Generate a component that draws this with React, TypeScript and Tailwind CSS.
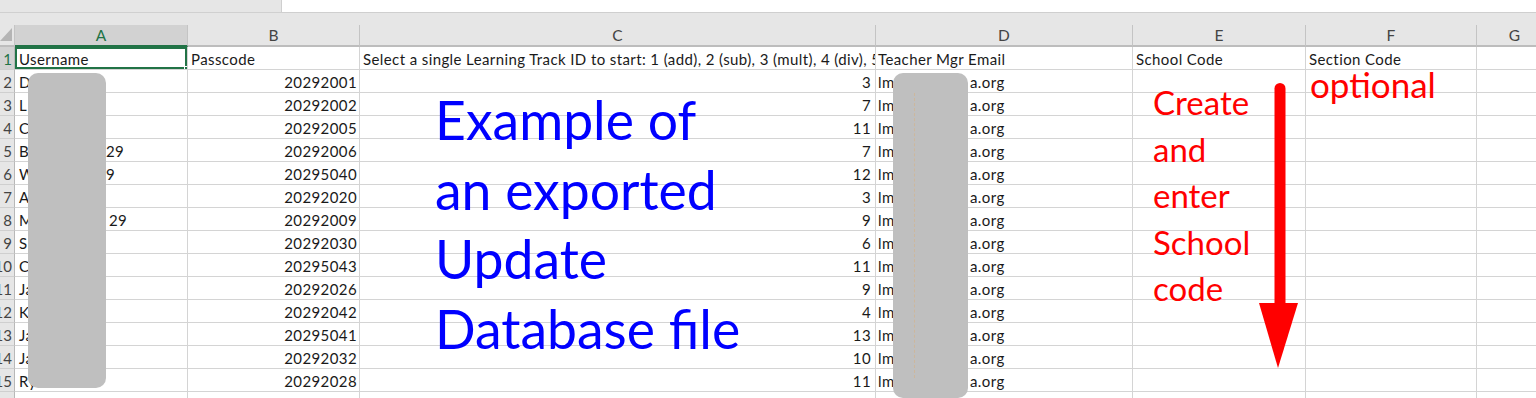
import React from "react";

type Row = {
  n: number;
  a: { f: string; s?: string; sw?: number };
  b: string;
  c: string;
};

const rows: Row[] = [
  { n: 2, a: { f: "D" }, b: "20292001", c: "3" },
  { n: 3, a: { f: "L" }, b: "20292002", c: "7" },
  { n: 4, a: { f: "C" }, b: "20292005", c: "11" },
  { n: 5, a: { f: "B", s: "29", sw: 87 }, b: "20292006", c: "7" },
  { n: 6, a: { f: "W", s: "9", sw: 87 }, b: "20295040", c: "12" },
  { n: 7, a: { f: "A" }, b: "20292020", c: "3" },
  { n: 8, a: { f: "M", s: "29", sw: 90 }, b: "20292009", c: "9" },
  { n: 9, a: { f: "S" }, b: "20292030", c: "6" },
  { n: 10, a: { f: "C" }, b: "20295043", c: "11" },
  { n: 11, a: { f: "Ja" }, b: "20292026", c: "9" },
  { n: 12, a: { f: "K" }, b: "20292042", c: "4" },
  { n: 13, a: { f: "Ja" }, b: "20295041", c: "13" },
  { n: 14, a: { f: "Ja" }, b: "20292032", c: "10" },
  { n: 15, a: { f: "Ry" }, b: "20292028", c: "11" },
];

const cell =
  "h-[23px] shrink-0 border-r border-b border-[#d4d4d4] flex items-center pt-[3px] overflow-hidden whitespace-nowrap text-[15px] tracking-[0.4px] text-[#1a1a1a]";

function RowHead({ n, sel }: { n: number | string; sel?: boolean }) {
  return (
    <div
      className={`h-[23px] w-[15px] shrink-0 border-r border-r-[#b8b8b8] border-b border-b-[#cfcfcf] flex items-center justify-end pt-[3px] overflow-hidden whitespace-nowrap pr-[2px] text-[15px] ${
        sel ? "bg-[#d2d2d2] text-[#217346]" : "bg-[#e6e6e6] text-[#444]"
      }`}
    >
      {n}
    </div>
  );
}

function ColHead({ l, w, sel }: { l: string; w: string; sel?: boolean }) {
  return (
    <div
      className={`h-[22px] shrink-0 border-r border-r-[#c4c4c4] flex items-center justify-center pt-[2px] text-[15.5px] ${w} ${
        sel
          ? "bg-[#d2d2d2] text-[#217346] border-b-2 border-b-[#217346]"
          : "bg-[#e6e6e6] text-[#444] border-b-2 border-b-[#bdbdbd]"
      }`}
    >
      {l}
    </div>
  );
}

export default function App() {
  return (
    <div className="w-[1536px] h-[398px] overflow-hidden bg-white font-['Lato',sans-serif] relative">
      {/* top band */}
      <div className="h-[25px] bg-[#e6e6e6] flex flex-col">
        <div className="h-[13px] flex">
          <div className="w-[281px] border-b border-[#d0d0d0]" />
          <div className="flex-1 bg-white border-l border-b border-[#cfcfcf]" />
        </div>
      </div>

      {/* column headers */}
      <div className="flex">
        <div className="h-[22px] w-[15px] shrink-0 bg-[#e6e6e6] border-r border-r-[#c4c4c4] border-b-2 border-b-[#bdbdbd] flex items-end justify-end pb-[4px] pr-[2px]">
          <svg width="12" height="13" viewBox="0 0 12 13">
            <polygon points="12,0 12,13 0,13" fill="#b5b5b5" />
          </svg>
        </div>
        <ColHead l="A" w="w-[173px]" sel />
        <ColHead l="B" w="w-[172px]" />
        <ColHead l="C" w="w-[516px]" />
        <ColHead l="D" w="w-[257px]" />
        <ColHead l="E" w="w-[173px]" />
        <ColHead l="F" w="w-[171px]" />
        <ColHead l="G" w="w-[76px]" />
        <ColHead l="" w="w-[100px]" />
      </div>

      {/* row 1 */}
      <div className="flex">
        <RowHead n={1} sel />
        <div className={`${cell} w-[173px] pl-[4px] relative`}>
          Username
          <div className="absolute inset-0 border-2 border-[#217346]" />
          <div className="absolute right-[-3px] bottom-[-3px] w-[6px] h-[6px] bg-[#217346] border border-white" />
        </div>
        <div className={`${cell} w-[172px] pl-[3px]`}>Passcode</div>
        <div className={`${cell} w-[516px] pl-[3px]`}>
          Select a single Learning Track ID to start: 1 (add), 2 (sub), 3 (mult), 4 (div), 5 (mixed)
        </div>
        <div className={`${cell} w-[257px] pl-[2px]`}>Teacher Mgr Email</div>
        <div className={`${cell} w-[173px] pl-[3px]`}>School Code</div>
        <div className={`${cell} w-[171px] pl-[3px]`}>Section Code</div>
        <div className={`${cell} w-[76px]`} />
        <div className={`${cell} w-[100px]`} />
      </div>

      {rows.map((r) => (
        <div className="flex" key={r.n}>
          <RowHead n={r.n} />
          <div className={`${cell} w-[173px] pl-[4px]`}>
            {r.a.s ? (
              <>
                <span className="inline-block" style={{ width: r.a.sw }}>
                  {r.a.f}
                </span>
                {r.a.s}
              </>
            ) : (
              r.a.f
            )}
          </div>
          <div className={`${cell} w-[172px] justify-end pr-[2px]`}>{r.b}</div>
          <div className={`${cell} w-[516px] justify-end pr-[4px]`}>{r.c}</div>
          <div className={`${cell} w-[257px] pl-[2px]`}>
            <span className="inline-block w-[92px]">lm</span>a.org
          </div>
          <div className={`${cell} w-[173px]`} />
          <div className={`${cell} w-[171px]`} />
          <div className={`${cell} w-[76px]`} />
          <div className={`${cell} w-[100px]`} />
        </div>
      ))}

      {/* row 16 (partially visible) */}
      <div className="flex">
        <RowHead n={16} />
        <div className={`${cell} w-[173px] pl-[4px]`}>Abdullah Hill</div>
        <div className={`${cell} w-[172px]`} />
        <div className={`${cell} w-[516px]`} />
        <div className={`${cell} w-[257px] pl-[2px]`}>lm</div>
        <div className={`${cell} w-[173px]`} />
        <div className={`${cell} w-[171px]`} />
        <div className={`${cell} w-[76px]`} />
        <div className={`${cell} w-[100px]`} />
      </div>

      {/* redaction boxes */}
      <div className="absolute left-[28px] top-[73px] w-[78px] h-[315px] rounded-[10px] bg-[#bfbfbf]" />
      <div className="absolute left-[893px] top-[73px] w-[75px] h-[325px] rounded-[10px] bg-[#bfbfbf]">
        <div className="absolute left-[21px] top-[20px] h-[285px] border-l border-dashed border-[#cdb79c]" />
      </div>

      {/* blue annotation */}
      <div className="absolute left-[435px] top-[85px] text-[53.5px] leading-[69.5px] text-[#0000ff] whitespace-nowrap">
        <div>Example of</div>
        <div>an exported</div>
        <div>Update</div>
        <div>Database file</div>
      </div>

      {/* red annotations */}
      <div className="absolute left-[1153px] top-[79px] text-[33px] leading-[46.5px] text-[#ff0000] whitespace-nowrap">
        <div>Create</div>
        <div>and</div>
        <div>enter</div>
        <div>School</div>
        <div>code</div>
      </div>
      <div className="absolute left-[1310px] top-[68px] text-[35px] leading-[32px] text-[#ff0000] whitespace-nowrap">
        optional
      </div>

      <svg
        className="absolute left-[1255px] top-[78px]"
        width="50"
        height="295"
        viewBox="0 0 50 295"
      >
        <rect x="19.5" y="5" width="11" height="225" rx="5.5" fill="#ff0000" />
        <polygon points="4,225 43,225 23,290" fill="#ff0000" />
      </svg>
    </div>
  );
}
